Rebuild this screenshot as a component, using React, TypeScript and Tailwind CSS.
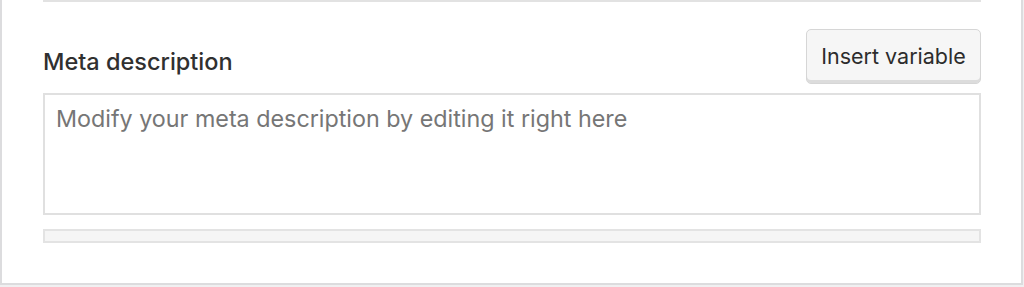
export default function App() {
  return (
    <div className="h-[287px] w-[1024px] bg-[#f0f0f1] font-['Inter',sans-serif]">
      <div className="flex h-[285px] w-[1023px] flex-col border-x-2 border-b-2 border-[#dcdcde] bg-white pl-[41px] pr-[40px]">
        <div className="h-[2px] bg-[#e2e2e2]" />

        <div className="mt-[27px] flex items-end justify-between">
          <label
            htmlFor="meta-description"
            className="mb-[8px] text-[23.5px] leading-[28px] font-medium text-[#303030]"
          >
            Meta description
          </label>
          <button
            type="button"
            className="h-[55px] w-[175px] rounded-[5px] border border-[#d6d6d6] bg-[#f6f6f6] text-[21.5px] text-[#2c2c2c] shadow-[inset_0_-3px_0_#dcdcdc]"
          >
            Insert variable
          </button>
        </div>

        <textarea
          id="meta-description"
          placeholder="Modify your meta description by editing it right here"
          className="mt-[9px] h-[122px] w-full resize-none border-2 border-[#e0e0e0] px-[11px] pt-[10px] pb-[6px] text-[23.3px] leading-[28px] text-[#2c2c2c] outline-none placeholder:text-[#767676]"
        />

        <div className="mt-[14px] h-[14px] w-full border-2 border-[#e3e3e3] bg-[#f5f5f5]" />
      </div>
    </div>
  );
}
